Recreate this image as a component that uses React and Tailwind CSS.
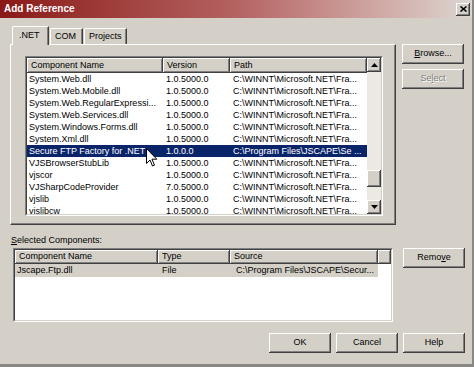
import React from "react";

const raised =
  "bg-[#d4d0c8] shadow-[inset_-1px_-1px_#404040,inset_1px_1px_#ffffff,inset_-2px_-2px_#808080,inset_2px_2px_#d4d0c8]";
const headerCell =
  "h-full flex items-center pl-[4px] bg-[#d4d0c8] shadow-[inset_-1px_-1px_#404040,inset_1px_1px_#ffffff,inset_-2px_-2px_#808080] whitespace-nowrap overflow-hidden";

function Button({ children, disabled }) {
  return (
    <div
      className={
        "w-[62px] h-[20px] flex items-center justify-center text-[9px] " +
        raised +
        (disabled ? " text-[#808080] [text-shadow:1px_1px_0_#ffffff]" : " text-black")
      }
    >
      {children}
    </div>
  );
}

function Arrow({ down }) {
  return (
    <svg width="7" height="4" viewBox="0 0 7 4">
      {down ? <path d="M0 0 H7 L3.5 4 Z" fill="#000" /> : <path d="M0 4 H7 L3.5 0 Z" fill="#000" />}
    </svg>
  );
}

const rows = [
  ["System.Web.dll", "1.0.5000.0", "C:\\WINNT\\Microsoft.NET\\Fra..."],
  ["System.Web.Mobile.dll", "1.0.5000.0", "C:\\WINNT\\Microsoft.NET\\Fra..."],
  ["System.Web.RegularExpressi...", "1.0.5000.0", "C:\\WINNT\\Microsoft.NET\\Fra..."],
  ["System.Web.Services.dll", "1.0.5000.0", "C:\\WINNT\\Microsoft.NET\\Fra..."],
  ["System.Windows.Forms.dll", "1.0.5000.0", "C:\\WINNT\\Microsoft.NET\\Fra..."],
  ["System.Xml.dll", "1.0.5000.0", "C:\\WINNT\\Microsoft.NET\\Fra..."],
  ["Secure FTP Factory for .NET", "1.0.0.0", "C:\\Program Files\\JSCAPE\\Se ...", true],
  ["VJSBrowserStubLib", "1.0.5000.0", "C:\\WINNT\\Microsoft.NET\\Fra..."],
  ["vjscor", "1.0.5000.0", "C:\\WINNT\\Microsoft.NET\\Fra..."],
  ["VJSharpCodeProvider", "7.0.5000.0", "C:\\WINNT\\Microsoft.NET\\Fra..."],
  ["vjslib", "1.0.5000.0", "C:\\WINNT\\Microsoft.NET\\Fra..."],
  ["vjslibcw", "1.0.5000.0", "C:\\WINNT\\Microsoft.NET\\Fra..."],
];

function Sunken({ className, children }) {
  return (
    <div className={"border border-t-[#808080] border-l-[#808080] border-r-white border-b-white " + className}>
      <div className="w-full h-full border border-t-[#404040] border-l-[#404040] border-r-[#d4d0c8] border-b-[#d4d0c8] bg-white overflow-hidden">
        {children}
      </div>
    </div>
  );
}

export default function App() {
  return (
    <div className="w-[474px] h-[367px] bg-[#d4d0c8] border-r-2 border-b-[3px] border-[#8a8884] flex flex-col font-['Liberation_Sans',Arial,sans-serif] text-[9px] text-black overflow-hidden select-none">
      {/* Title bar */}
      <div className="h-[18px] shrink-0 flex items-center justify-between pl-[4px] pr-[2px] bg-gradient-to-r from-[#8a1616] via-[#b46262] to-[#dcd6d2]">
        <span className="text-white font-bold text-[10px] leading-none">Add Reference</span>
        <div className={"w-[14px] h-[13px] flex items-center justify-center " + raised}>
          <svg width="7" height="6" viewBox="0 0 7 6">
            <path d="M0.5 0.5 L6.5 5.5 M6.5 0.5 L0.5 5.5" stroke="#000" strokeWidth="1.6" />
          </svg>
        </div>
      </div>

      {/* Top section */}
      <div className="flex pt-[8px]">
        <div className="ml-[10px] flex flex-col">
          {/* Tabs */}
          <div className="flex items-end h-[18px] pl-[2px] gap-[1px]">
            <div className="relative z-10 mb-[-1px] w-[37px] h-[19px] bg-[#d4d0c8] border-t border-l border-t-white border-l-white border-r border-r-[#404040] shadow-[inset_-1px_0_#808080] rounded-tl-[2px] flex items-center pl-[6px] pb-[1px]">
              .NET
            </div>
            <div className="w-[33px] h-[16px] border-t border-l border-t-white border-l-white border-r border-r-[#404040] shadow-[inset_-1px_0_#808080] rounded-tl-[2px] flex items-center pl-[4px]">
              COM
            </div>
            <div className="w-[43px] h-[16px] border-t border-l border-t-white border-l-white border-r border-r-[#404040] shadow-[inset_-1px_0_#808080] rounded-tl-[2px] flex items-center pl-[4px]">
              Projects
            </div>
          </div>
          {/* Panel */}
          <div className="w-[386px] h-[181px] border border-t-white border-l-white border-r-[#404040] border-b-[#404040] shadow-[inset_-1px_-1px_#808080] pl-[14px] pt-[11px]">
            <Sunken className="w-[358px] h-[160px]">
              <div className="flex h-full">
                <div className="w-[340px] flex flex-col">
                  <div className="flex h-[15px] shrink-0">
                    <div className={"w-[136px] " + headerCell}>Component Name</div>
                    <div className={"w-[67px] " + headerCell}>Version</div>
                    <div className={"w-[137px] " + headerCell}>Path</div>
                  </div>
                  <div className="relative flex flex-col">
                    {rows.map(([n, v, p, sel], i) => (
                      <div
                        key={i}
                        className={
                          "flex h-[12px] shrink-0 leading-[12px] whitespace-nowrap " +
                          (sel ? "bg-[#0a246a] text-white" : "")
                        }
                      >
                        <div className="w-[136px] pl-[2px] overflow-hidden">{n}</div>
                        <div className="w-[67px] pl-[3px] overflow-hidden">{v}</div>
                        <div className="w-[137px] pl-[3px] overflow-hidden">{p}</div>
                      </div>
                    ))}
                    <svg
                      className="absolute left-[119px] top-[75px]"
                      width="12"
                      height="19"
                      viewBox="0 0 12 19"
                    >
                      <path
                        d="M0.5 0.5 L0.5 15.5 L4 12 L6.5 18 L8.5 17.2 L6 11.2 L10.8 11.2 Z"
                        fill="#fff"
                        stroke="#000"
                        strokeWidth="1"
                      />
                    </svg>
                  </div>
                </div>
                {/* Scrollbar */}
                <div className="w-[14px] flex flex-col">
                  <div className={"h-[14px] flex items-center justify-center " + raised}>
                    <Arrow />
                  </div>
                  <div className="flex-1 flex flex-col bg-[#ece9e3]">
                    <div className="h-[98px]" />
                    <div className={"h-[17px] " + raised} />
                  </div>
                  <div className={"h-[14px] flex items-center justify-center " + raised}>
                    <Arrow down />
                  </div>
                </div>
              </div>
            </Sunken>
          </div>
        </div>
        <div className="ml-[6px] pt-[18px] flex flex-col gap-[5px]">
          <Button>
            <span>
              <u>B</u>rowse...
            </span>
          </Button>
          <Button disabled>
            <span>
              Se<u>l</u>ect
            </span>
          </Button>
        </div>
      </div>

      {/* Label */}
      <div className="mt-[9px] h-[12px] leading-[12px] pl-[11px] mb-[2px]">
        <u>S</u>elected Components:
      </div>

      {/* Lower list */}
      <div className="flex">
        <Sunken className="ml-[13px] w-[380px] h-[74px]">
          <div className="flex h-[14px]">
            <div className={"w-[143px] " + headerCell}>Component Name</div>
            <div className={"w-[72px] " + headerCell}>Type</div>
            <div className={"w-[148px] " + headerCell}>Source</div>
            <div className={"w-[13px] " + headerCell}></div>
          </div>
          <div className="flex h-[13px] leading-[13px] whitespace-nowrap">
            <div className="flex bg-[#d4d0c8]">
              <div className="w-[143px] pl-[2px]">Jscape.Ftp.dll</div>
              <div className="w-[72px] pl-[4px]">File</div>
              <div className="w-[148px] pl-[6px]">C:\Program Files\JSCAPE\Secur...</div>
            </div>
          </div>
        </Sunken>
        <div className="ml-[10px]">
          <Button>
            <span>
              Remo<u>v</u>e
            </span>
          </Button>
        </div>
      </div>

      {/* Bottom buttons */}
      <div className="flex justify-end gap-[5px] pr-[7px] mt-[11px]">
        <Button>OK</Button>
        <Button>Cancel</Button>
        <Button>Help</Button>
      </div>
    </div>
  );
}
